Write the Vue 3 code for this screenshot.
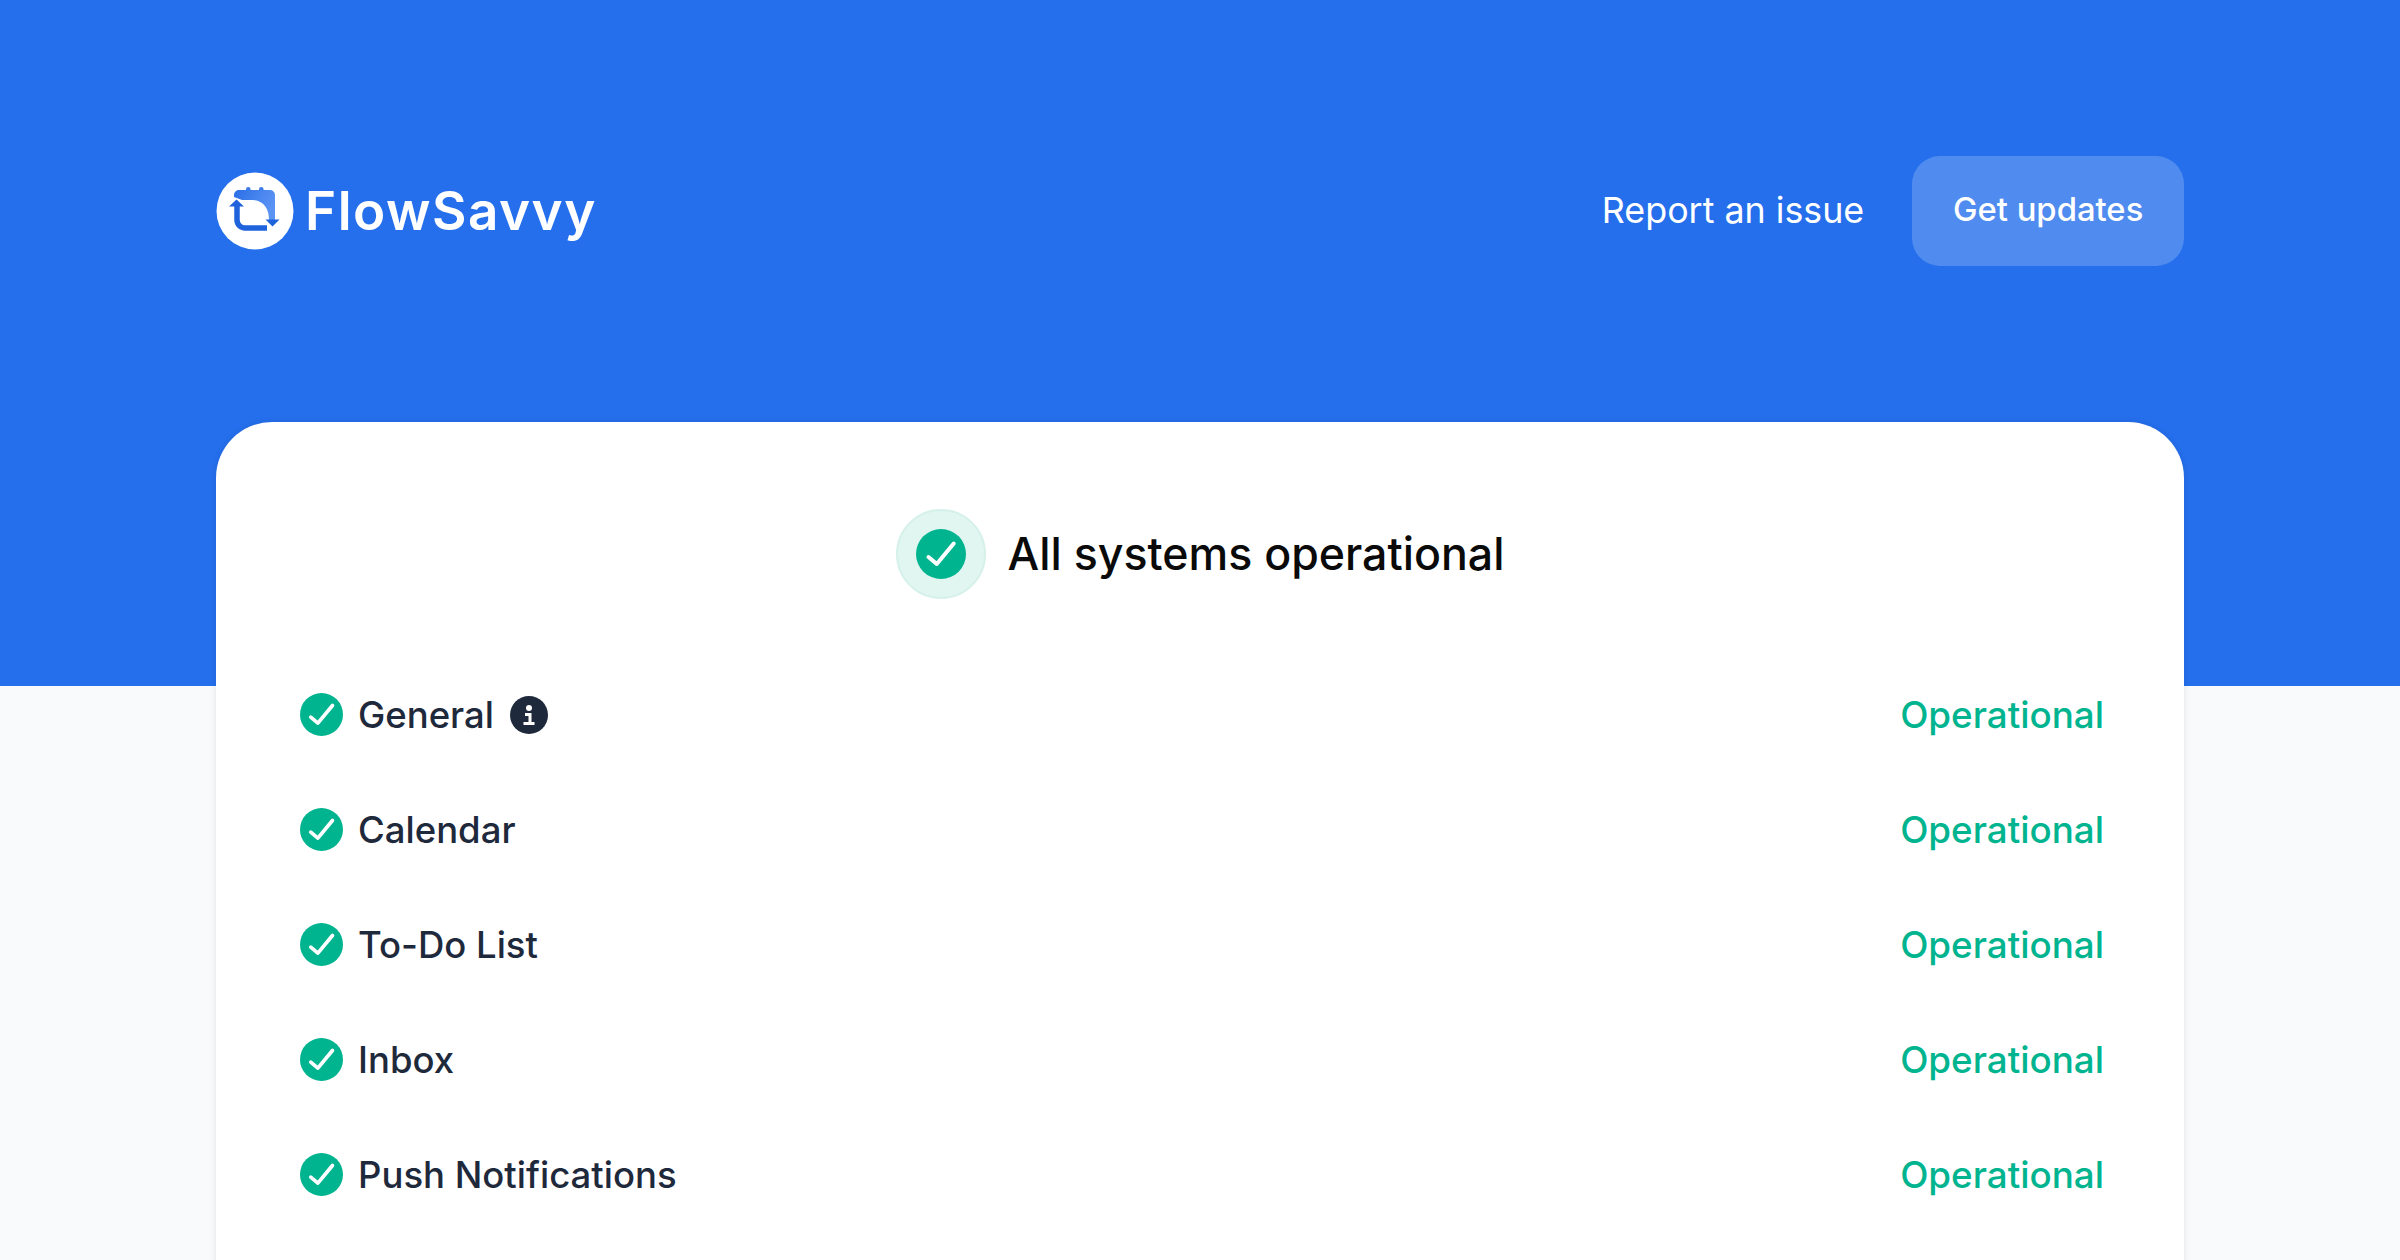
<script setup>
const services = [
  { name: 'General', info: true },
  { name: 'Calendar' },
  { name: 'To-Do List' },
  { name: 'Inbox' },
  { name: 'Push Notifications' },
]
</script>

<template>
  <div class="page">
    <header class="hero">
      <div class="topbar">
        <a class="brand">
          <svg class="brand-icon" viewBox="0 0 78 78" width="78" height="78">
            <defs>
              <linearGradient id="cal" x1="0" y1="0" x2="1" y2="0.400">
                <stop offset="0" stop-color="#2a6fe6" />
                <stop offset="1" stop-color="#5b93f4" />
              </linearGradient>
            </defs>
            <circle cx="39" cy="39" r="38.500" fill="#fff" />
            <rect x="30" y="15" width="4.500" height="6" rx="2.200" fill="#3b7bec" />
            <rect x="43" y="15" width="4.500" height="6" rx="2.200" fill="#3b7bec" />
            <path d="M18 25v-2a5 5 0 0 1 5-5h31a5 5 0 0 1 5 5v25h-6c0-11-5-19-16-20H26z" fill="url(#cal)" />
            <path d="M21 33v15a8 8 0 0 0 8 8h22" fill="none" stroke="#1f63dc" stroke-width="5.500" />
            <path d="M20.500 27.500L13 34.500h15z" fill="#1f63dc" />
            <path d="M49.500 47.500h14L56.500 54.500z" fill="#1f63dc" />
          </svg>
          <span class="brand-name">FlowSavvy</span>
        </a>
        <nav class="actions">
          <a class="report">Report an issue</a>
          <button class="updates">Get updates</button>
        </nav>
      </div>
    </header>

    <main class="card">
      <div class="summary">
        <span class="summary-ring">
          <svg viewBox="0 0 20 20" width="50" height="50">
            <circle cx="10" cy="10" r="10" fill="#00b48f" />
            <path d="M5 11.200L8.300 14 15.100 5.800" fill="none" stroke="#fff" stroke-width="1.600" stroke-linecap="round" stroke-linejoin="round" />
          </svg>
        </span>
        <h1>All systems operational</h1>
      </div>

      <ul class="services">
        <li v-for="s in services" :key="s.name" class="service">
          <svg class="check" viewBox="0 0 20 20" width="43" height="43">
            <circle cx="10" cy="10" r="10" fill="#00b48f" />
            <path d="M5 11.200L8.300 14 15.100 5.800" fill="none" stroke="#fff" stroke-width="1.700" stroke-linecap="round" stroke-linejoin="round" />
          </svg>
          <span class="name">{{ s.name }}</span>
          <svg v-if="s.info" class="info" viewBox="0 0 38 38" width="38" height="38">
            <circle cx="19" cy="19" r="19" fill="#1e293b" />
            <circle cx="19" cy="12" r="3" fill="#fff" />
            <path d="M15 18.500h5v9M13.500 27.500h11" fill="none" stroke="#fff" stroke-width="3" />
          </svg>
          <span class="status">Operational</span>
        </li>
      </ul>
    </main>
  </div>
</template>

<style>
html, body {
  margin: 0;
  overflow: hidden;
  background: #f9fafb;
}
</style>

<style scoped>
.page {
  height: 1260px;
  overflow: hidden;
  background: #f9fafb;
  font-family: Inter, "Liberation Sans", sans-serif;
}

.hero {
  height: 686px;
  padding: 156px 216px 0;
  box-sizing: border-box;
  background: #256fec;
}

.topbar {
  display: flex;
  align-items: center;
  justify-content: space-between;
  height: 110px;
}

.brand {
  display: flex;
  align-items: center;
  gap: 11px;
}

.brand-icon {
  display: block;
}

.brand-name {
  font-size: 53px;
  line-height: 60px;
  font-weight: 600;
  letter-spacing: 1.500px;
  color: #fff;
}

.actions {
  display: flex;
  align-items: center;
  gap: 48px;
}

.report {
  font-size: 35.800px;
  line-height: 44px;
  color: #fff;
  margin-top: -2px;
}

.updates {
  height: 110px;
  padding: 0 40.700px 4px;
  border: 0;
  border-radius: 28px;
  background: rgba(255, 255, 255, 0.2);
  color: #fff;
  font-family: inherit;
  font-size: 32.800px;
  font-weight: 500;
}

.card {
  margin: -264px 216px 0;
  position: relative;
  height: 1000px;
  padding: 87px 80px 0 84px;
  box-sizing: border-box;
  background: #fff;
  border-radius: 56px 56px 0 0;
  box-shadow: 0 0 6px rgba(15, 23, 42, 0.1);
}

.summary {
  display: flex;
  align-items: center;
  justify-content: center;
  gap: 22px;
  padding-right: 4px;
}

.summary-ring {
  display: flex;
  align-items: center;
  justify-content: center;
  width: 90px;
  height: 90px;
  box-sizing: border-box;
  border: 2px solid #d6f1ea;
  border-radius: 50%;
  background: #e2f6f1;
}

h1 {
  margin: 0;
  font-size: 44.700px;
  font-weight: 500;
  color: #0a0a0a;
}

.services {
  list-style: none;
  margin: 58px 0 0;
  padding: 0;
}

.service {
  display: flex;
  align-items: center;
  height: 115px;
  font-size: 36.500px;
  font-weight: 500;
  color: #1e293b;
}

.check {
  margin-right: 15px;
}

.info {
  margin-left: 16px;
}

.status {
  margin-left: auto;
  font-size: 36.800px;
  font-weight: 500;
  color: #00b48f;
}
</style>
